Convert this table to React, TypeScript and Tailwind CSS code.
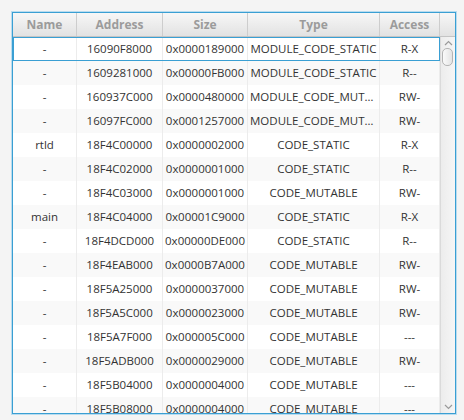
const rows = [
  ["-", "16090F8000", "0x0000189000", "MODULE_CODE_STATIC", "R-X"],
  ["-", "1609281000", "0x00000FB000", "MODULE_CODE_STATIC", "R--"],
  ["-", "160937C000", "0x0000480000", "MODULE_CODE_MUTABLE", "RW-"],
  ["-", "16097FC000", "0x0001257000", "MODULE_CODE_MUTABLE", "RW-"],
  ["rtld", "18F4C00000", "0x0000002000", "CODE_STATIC", "R-X"],
  ["-", "18F4C02000", "0x0000001000", "CODE_STATIC", "R--"],
  ["-", "18F4C03000", "0x0000001000", "CODE_MUTABLE", "RW-"],
  ["main", "18F4C04000", "0x00001C9000", "CODE_STATIC", "R-X"],
  ["-", "18F4DCD000", "0x00000DE000", "CODE_STATIC", "R--"],
  ["-", "18F4EAB000", "0x0000B7A000", "CODE_MUTABLE", "RW-"],
  ["-", "18F5A25000", "0x0000037000", "CODE_MUTABLE", "RW-"],
  ["-", "18F5A5C000", "0x0000023000", "CODE_MUTABLE", "RW-"],
  ["-", "18F5A7F000", "0x000005C000", "CODE_MUTABLE", "---"],
  ["-", "18F5ADB000", "0x0000029000", "CODE_MUTABLE", "RW-"],
  ["-", "18F5B04000", "0x0000004000", "CODE_MUTABLE", "---"],
  ["-", "18F5B08000", "0x0000004000", "CODE_MUTABLE", "---"],
]

const cols = [
  { title: "Name", w: "w-[64px]" },
  { title: "Address", w: "w-[86px]" },
  { title: "Size", w: "w-[85px]" },
  { title: "Type", w: "w-[132px]" },
  { title: "Access", w: "w-[60px]" },
]

export default function App() {
  return (
    <div
      className="h-[420px] w-[464px] bg-[#f4f4f4] pl-[12px] pt-[12px]"
      style={{ fontFamily: '"Open Sans", "Noto Sans", sans-serif' }}
    >
      <div className="flex h-[402px] w-[444px] flex-col overflow-hidden border border-[#3a9fd3] bg-white shadow-[0_0_0_1px_#b9dcef]">
        {/* header */}
        <div className="flex h-[24px] shrink-0 border-b border-[#c4c4c4] bg-gradient-to-b from-[#f7f7f7] to-[#e2e2e2]">
          {cols.map((c) => (
            <div
              key={c.title}
              className={`${c.w} flex items-center justify-center border-r border-[#cdcdcd] text-[12px] font-bold text-[#9b9b9b]`}
            >
              {c.title}
            </div>
          ))}
          <div className="flex-1" />
        </div>
        <div className="flex min-h-0 flex-1">
          <div className="w-[427px] overflow-hidden">
            {rows.map((r, i) => (
              <div
                key={i}
                className={`relative flex h-[24px] text-[11.5px] text-[#333333] ${i % 2 === 1 ? "bg-[#f9f9f9]" : "bg-white"}`}
              >
                {r.map((v, j) => (
                  <div
                    key={j}
                    className={`${cols[j].w} truncate border-r border-[#ececec] px-[2px] text-center leading-[24px]`}
                  >
                    {v}
                  </div>
                ))}
                {i === 0 && (
                  <div className="pointer-events-none absolute inset-0 border border-[#3a9fd3]" />
                )}
              </div>
            ))}
          </div>
          {/* scrollbar */}
          <div className="relative w-[15px] border-l border-[#dadada] bg-gradient-to-r from-[#ececec] to-[#f6f6f6]">
            <svg className="absolute left-[3px] top-[3px]" width="9" height="6" viewBox="0 0 9 6">
              <path d="M1 5 L4.5 1.5 L8 5" fill="none" stroke="#9a9a9a" strokeWidth="1.2" />
            </svg>
            <div className="absolute left-[1px] top-[11px] h-[18px] w-[11px] rounded-[5px] border border-[#b4b4b4] bg-gradient-to-r from-[#fafafa] to-[#e4e4e4]" />
            <svg className="absolute bottom-[3px] left-[3px]" width="9" height="6" viewBox="0 0 9 6">
              <path d="M1 1 L4.5 4.5 L8 1" fill="none" stroke="#9a9a9a" strokeWidth="1.2" />
            </svg>
          </div>
        </div>
      </div>
    </div>
  )
}
